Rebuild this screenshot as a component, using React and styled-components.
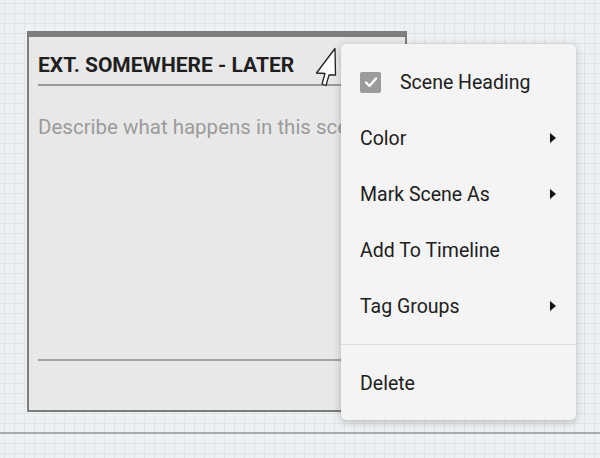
import styled, { createGlobalStyle } from 'styled-components';

const GlobalStyle = createGlobalStyle`
  html, body {
    margin: 0;
    padding: 0;
  }
  body {
    width: 600px;
    height: 458px;
    overflow: hidden;
    font-family: Roboto, "Liberation Sans", sans-serif;
  }
`;

const menuItems = [
  { label: 'Color', sub: true },
  { label: 'Mark Scene As', sub: true },
  { label: 'Add To Timeline' },
  { label: 'Tag Groups', sub: true },
];

const App = () => {
  return (
    <Page>
      <GlobalStyle />
      <Canvas>
        <SceneCard>
          <CardHeading>EXT. SOMEWHERE - LATER</CardHeading>
          <CardBody>
            <Placeholder>Describe what happens in this scene</Placeholder>
          </CardBody>
          <CardFooter />
        </SceneCard>

        <Cursor width="26" height="42" viewBox="0 0 26 42">
          <path
            d="M21 1.5 L21.5 28 L15 28 L12 38.5 L8 37 L11 26.5 L2.5 26 Z"
            fill="#fff"
            stroke="#222"
            strokeWidth="1.3"
            strokeLinejoin="round"
          />
        </Cursor>

        <Menu>
          <MenuItem>
            <Checkbox>
              <svg width="14" height="12" viewBox="0 0 14 12">
                <path
                  d="M2 6.5 L5.5 10 L12 2.5"
                  fill="none"
                  stroke="#fff"
                  strokeWidth="2.4"
                  strokeLinecap="round"
                  strokeLinejoin="round"
                />
              </svg>
            </Checkbox>
            <ItemLabel $indent>Scene Heading</ItemLabel>
          </MenuItem>
          {menuItems.map((item) => (
            <MenuItem key={item.label}>
              <ItemLabel>{item.label}</ItemLabel>
              {item.sub && <SubArrow />}
            </MenuItem>
          ))}
          <Separator />
          <MenuItem>
            <ItemLabel>Delete</ItemLabel>
          </MenuItem>
        </Menu>
      </Canvas>
      <Timeline />
    </Page>
  );
};

const Page = styled.div`
  width: 600px;
  height: 458px;
  display: flex;
  flex-direction: column;
  background-color: #eef1f3;
  background-image:
    linear-gradient(to right, #dfe4e7 1px, transparent 1px),
    linear-gradient(to bottom, #dfe4e7 1px, transparent 1px);
  background-size: 10px 10px;
  background-position: 4px 3px;
`;

const Canvas = styled.div`
  position: relative;
  height: 432px;
  border-bottom: 2px solid #a3adb1;
  flex-shrink: 0;
`;

const Timeline = styled.div`
  flex: 1;
`;

const SceneCard = styled.div`
  position: absolute;
  left: 27px;
  top: 31px;
  width: 380px;
  height: 381px;
  box-sizing: border-box;
  background: #e8e8e8;
  border: 2px solid #7d7d7d;
  border-top-width: 6px;
  display: flex;
  flex-direction: column;
  padding: 0 9px;
`;

const CardHeading = styled.div`
  font-family: Roboto, "Liberation Sans", sans-serif;
  font-weight: 700;
  font-size: 21px;
  line-height: 24px;
  color: #1f1f1f;
  padding-top: 16px;
  padding-bottom: 7px;
  border-bottom: 2px solid #9a9a9a;
  white-space: nowrap;
`;

const CardBody = styled.div`
  flex: 1;
  padding-top: 29px;
  border-bottom: 2px solid #a3a3a3;
`;

const Placeholder = styled.div`
  max-width: 303px;
  overflow: hidden;
  white-space: nowrap;
  font-size: 20.5px;
  line-height: 24px;
  color: #9b9b9b;
`;

const CardFooter = styled.div`
  height: 49px;
`;

const Cursor = styled.svg`
  position: absolute;
  left: 314px;
  top: 47px;
`;

const Menu = styled.div`
  position: absolute;
  left: 341px;
  top: 44px;
  width: 235px;
  height: 376px;
  box-sizing: border-box;
  padding: 10px 0 9px;
  background: #f4f4f4;
  border-radius: 5px;
  box-shadow: 0 2px 8px rgba(0, 0, 0, 0.22), 0 0 1px rgba(0, 0, 0, 0.15);
  display: flex;
  flex-direction: column;
`;

const MenuItem = styled.div`
  height: 56px;
  display: flex;
  align-items: center;
  padding: 0 20px 0 19px;
  flex-shrink: 0;
`;

const ItemLabel = styled.span`
  flex: 1;
  font-size: 19.5px;
  color: #202020;
  margin-left: ${(p) => (p.$indent ? '19px' : '0')};
`;

const Checkbox = styled.span`
  width: 21px;
  height: 21px;
  border-radius: 2px;
  background: #9b9b9b;
  display: flex;
  align-items: center;
  justify-content: center;
`;

const SubArrow = styled.span`
  width: 0;
  height: 0;
  border-top: 5px solid transparent;
  border-bottom: 5px solid transparent;
  border-left: 6px solid #111;
`;

const Separator = styled.div`
  height: 1px;
  background: #dcdcdc;
  margin: 10px 0;
  flex-shrink: 0;
`;

export default App;
